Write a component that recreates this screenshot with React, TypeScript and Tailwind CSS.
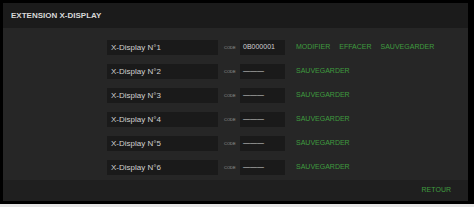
const rows = [
  { name: "X-Display N°1", code: "0B000001", actions: ["MODIFIER", "EFFACER", "SAUVEGARDER"] },
  { name: "X-Display N°2", code: "———", actions: ["SAUVEGARDER"] },
  { name: "X-Display N°3", code: "———", actions: ["SAUVEGARDER"] },
  { name: "X-Display N°4", code: "———", actions: ["SAUVEGARDER"] },
  { name: "X-Display N°5", code: "———", actions: ["SAUVEGARDER"] },
  { name: "X-Display N°6", code: "———", actions: ["SAUVEGARDER"] },
];

export default function App() {
  return (
    <div className="h-[207px] w-[474px] bg-[#e6e6e6] font-['Liberation_Sans',Arial,sans-serif]">
      <div className="h-[204px] w-[474px] bg-black pl-[3px] pr-[6px] pt-[3px] pb-[3px]">
        <div className="flex h-full flex-col">
          {/* Header */}
          <div className="flex h-[25px] items-center bg-[#1b1b1b] pl-[8px]">
            <span className="text-[8px] font-bold text-[#d8d8d8]">EXTENSION X-DISPLAY</span>
          </div>

          {/* Body */}
          <div className="flex h-[152px] flex-col gap-[9px] bg-[#262626] pl-[104px] pt-[12px]">
            {rows.map((r) => (
              <div key={r.name} className="flex h-[15px] items-center">
                <div className="flex h-[15px] w-[111px] items-center bg-[#1a1a1a] pl-[4px] text-[8px] text-[#d0d0d0]">
                  {r.name}
                </div>
                <span className="ml-[6px] w-[15px] text-[4px] text-[#9a9a9a]">CODE</span>
                <div className="ml-[1px] flex h-[15px] w-[45px] items-center bg-[#1a1a1a] pl-[3px] text-[7px] text-[#d0d0d0]">
                  {r.code}
                </div>
                <div className="ml-[11px] flex gap-[9px] text-[7px] text-[#3f9c3f]">
                  {r.actions.map((a) => (
                    <span key={a}>{a}</span>
                  ))}
                </div>
              </div>
            ))}
          </div>

          {/* Footer */}
          <div className="flex flex-1 items-center justify-end bg-[#1f1f1f] pr-[17px]">
            <span className="text-[7px] text-[#3f9c3f]">RETOUR</span>
          </div>
        </div>
      </div>
    </div>
  );
}
